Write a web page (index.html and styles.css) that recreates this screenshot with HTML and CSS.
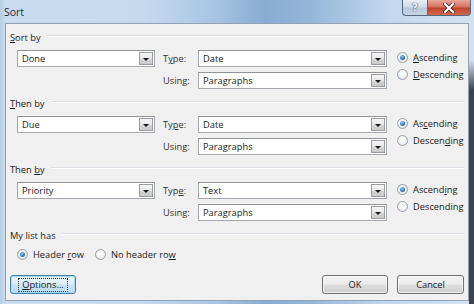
FILE: index.html
```html
<!DOCTYPE html>
<html>
<head>
  <title>Sort</title>
  <link rel="stylesheet" href="styles.css">
</head>
<body>
<div class="window">
  <div class="titlebar">
    <span class="title">Sort</span>
    <div class="caption-buttons">
      <span class="cap-btn help">?</span>
      <span class="cap-btn close">
        <svg width="12" height="10" viewBox="0 0 12 10"><path d="M2 1 L10 9 M10 1 L2 9" stroke="#3a1a14" stroke-width="3.6" stroke-linecap="square"/><path d="M2 1 L10 9 M10 1 L2 9" stroke="#ffffff" stroke-width="2.2" stroke-linecap="square"/></svg>
      </span>
    </div>
  </div>

  <div class="client">
    <div class="group">
      <div class="group-head"><span><u>S</u>ort by</span></div>
      <div class="sort-row">
        <div class="combo">Done<span class="drop"></span></div>
        <span class="field-label">T<u>y</u>pe:</span>
        <div class="combo">Date<span class="drop"></span></div>
        <div class="order">
          <div class="radio-item"><span class="radio checked"></span><span><u>A</u>scending</span></div>
          <div class="radio-item"><span class="radio"></span><span><u>D</u>escending</span></div>
        </div>
        <span class="field-label using">Using:</span>
        <div class="combo using">Paragraphs<span class="drop"></span></div>
      </div>
    </div>

    <div class="group">
      <div class="group-head"><span><u>T</u>hen by</span></div>
      <div class="sort-row">
        <div class="combo">Due<span class="drop"></span></div>
        <span class="field-label">Ty<u>p</u>e:</span>
        <div class="combo">Date<span class="drop"></span></div>
        <div class="order">
          <div class="radio-item"><span class="radio checked"></span><span>As<u>c</u>ending</span></div>
          <div class="radio-item"><span class="radio"></span><span>Descen<u>d</u>ing</span></div>
        </div>
        <span class="field-label using">Using:</span>
        <div class="combo using">Paragraphs<span class="drop"></span></div>
      </div>
    </div>

    <div class="group">
      <div class="group-head"><span>Then <u>b</u>y</span></div>
      <div class="sort-row">
        <div class="combo">Priority<span class="drop"></span></div>
        <span class="field-label">Typ<u>e</u>:</span>
        <div class="combo">Text<span class="drop"></span></div>
        <div class="order">
          <div class="radio-item"><span class="radio checked"></span><span>Ascend<u>i</u>ng</span></div>
          <div class="radio-item"><span class="radio"></span><span>Descendin<u>g</u></span></div>
        </div>
        <span class="field-label using">Using:</span>
        <div class="combo using">Paragraphs<span class="drop"></span></div>
      </div>
    </div>

    <div class="group list-has">
      <div class="group-head"><span>My list has</span></div>
      <div class="header-options">
        <div class="radio-item"><span class="radio checked"></span><span>Header <u>r</u>ow</span></div>
        <div class="radio-item"><span class="radio"></span><span>No header ro<u>w</u></span></div>
      </div>
    </div>

    <div class="button-row">
      <button class="btn focused"><span class="focus-rect"><u>O</u>ptions...</span></button>
      <span class="spacer"></span>
      <button class="btn">OK</button>
      <button class="btn">Cancel</button>
    </div>
  </div>
</div>
</body>
</html>
```

FILE: styles.css
```css
html, body {
  margin: 0;
  padding: 0;
}

body {
  width: 474px;
  height: 304px;
  overflow: hidden;
  font-family: 'Open Sans', 'Noto Sans', sans-serif;
  font-size: 9.3px;
  color: #1a1a1a;
  background-color: #3c434c;
}

u {
  text-decoration-thickness: 1px;
  text-underline-offset: 1px;
}

/* Window frame */
.window {
  width: 474px;
  height: 304px;
  display: flex;
  flex-direction: column;
  background:
    linear-gradient(180deg, rgba(60,67,76,0) 0px, rgba(60,67,76,0) 60px, #3c434c 90px) right top / 5px 100% no-repeat,
    linear-gradient(90deg, #b4cde6 0px, #cadcef 5px, #c6daee 30%, #a9c5e3 45%, #89abd2 56%, #97b7da 66%, #c3d8ee 82%, #d3e2f1 100%);
}

.titlebar {
  height: 23px;
  flex: none;
  display: flex;
  align-items: flex-start;
  justify-content: space-between;
}

.title {
  font-size: 10.5px;
  color: #1e2a36;
  padding: 5px 0 0 4px;
}

.caption-buttons {
  display: flex;
  margin-right: 3px;
  height: 16px;
}

.cap-btn {
  height: 15px;
  display: flex;
  align-items: center;
  justify-content: center;
  border: 1px solid #56687c;
  border-top: none;
}

.help {
  width: 24px;
  border-radius: 0 0 0 4px;
  border-right: none;
  background: linear-gradient(180deg, #e8eef5 0%, #cfdbe8 45%, #b8c9dc 55%, #c7d6e6 100%);
  color: #f4f8fc;
  font-family: 'DejaVu Sans', sans-serif;
  font-size: 11px;
  font-weight: bold;
  text-shadow: 0 0 1px #2f3f52, 0 0 1px #2f3f52;
}

.close {
  width: 42px;
  border-radius: 0 0 4px 0;
  background: linear-gradient(180deg, #e8a899 0%, #d67160 45%, #c0422c 55%, #d06a4f 100%);
}

/* Client area */
.client {
  flex: 1;
  margin: 0 5px 3px 5px;
  border: 1px solid #8fa2b8;
  background-color: #f0f0f0;
  padding: 6px 4px 6px 4px;
}

.group-head {
  height: 14px;
  display: flex;
  align-items: center;
  margin-bottom: 6px;
}

.group-head::after {
  content: "";
  flex: 1;
  margin-left: 6px;
  margin-top: -2px;
  border-top: 1px solid #d9dee4;
  border-bottom: 1px solid #ffffff;
}

.sort-row {
  display: grid;
  grid-template-columns: 138px 43px 189px 1fr;
  grid-template-rows: 17px 17px;
  row-gap: 5px;
  margin-left: 7px;
  margin-bottom: 7px;
}

.field-label {
  padding-left: 8px;
  display: flex;
  align-items: center;
  color: #333;
}

.field-label.using {
  grid-column: 2;
  grid-row: 2;
}

.combo.using {
  grid-column: 3;
  grid-row: 2;
}

.combo {
  position: relative;
  box-sizing: border-box;
  height: 17px;
  background-color: #fff;
  border: 1px solid #a4a7ad;
  border-top-color: #8f9297;
  padding: 0 0 0 4px;
  display: flex;
  align-items: center;
}

.drop {
  position: absolute;
  top: 1px;
  right: 1px;
  bottom: 1px;
  width: 14px;
  box-sizing: border-box;
  border: 1px solid #9a9da2;
  background: linear-gradient(180deg, #f6f6f6 0%, #e6e6e6 50%, #d6d6d6 51%, #cbcbcb 100%);
}

.drop::after {
  content: "";
  position: absolute;
  left: 3px;
  top: 5px;
  border-left: 3px solid transparent;
  border-right: 3px solid transparent;
  border-top: 3px solid #1a1a1a;
}

.order {
  grid-column: 4;
  grid-row: 1 / span 2;
  padding-left: 10px;
  margin-top: -1px;
  display: flex;
  flex-direction: column;
  gap: 1px;
}

/* Radio buttons */
.radio-item {
  height: 16px;
  display: flex;
  align-items: center;
  gap: 5px;
}

.radio {
  width: 11px;
  height: 11px;
  box-sizing: border-box;
  border-radius: 50%;
  border: 1px solid #9a9ea4;
  background: radial-gradient(circle at 50% 40%, #ffffff 0%, #f0f1f2 55%, #d8dadd 100%);
  display: flex;
  align-items: center;
  justify-content: center;
}

.radio.checked::after {
  content: "";
  width: 5px;
  height: 5px;
  border-radius: 50%;
  background: radial-gradient(circle at 40% 35%, #9fd2f5 0%, #3b87c4 45%, #1d4f82 100%);
}

.list-has .group-head {
  margin-bottom: 5px;
}

.header-options {
  display: flex;
  margin-left: 7px;
  gap: 11px;
}

.header-options .radio-item {
  height: 14px;
}

/* Buttons */
.button-row {
  display: flex;
  margin-top: 14px;
  gap: 9px;
}

.spacer {
  flex: 1;
}

.btn {
  width: 66px;
  height: 19px;
  padding: 0;
  font-family: inherit;
  font-size: 9.3px;
  color: #1a1a1a;
  border: 1px solid #707070;
  border-radius: 3px;
  background: linear-gradient(180deg, #f4f4f4 0%, #ebebeb 48%, #dddddd 52%, #cfcfcf 100%);
  box-shadow: inset 0 0 0 1px rgba(255,255,255,0.7);
}

.btn + .btn {
  width: 67px;
}

.btn.focused {
  border-color: #3c7fb1;
  background: linear-gradient(180deg, #eaf5fc 0%, #dcedf8 48%, #c9e3f4 52%, #bcdcf1 100%);
  box-shadow: inset 0 0 0 1px #a8dcf8;
}

.focus-rect {
  display: inline-block;
  padding: 0 3px;
  line-height: 12px;
  outline: 1px dotted #333;
}
```
